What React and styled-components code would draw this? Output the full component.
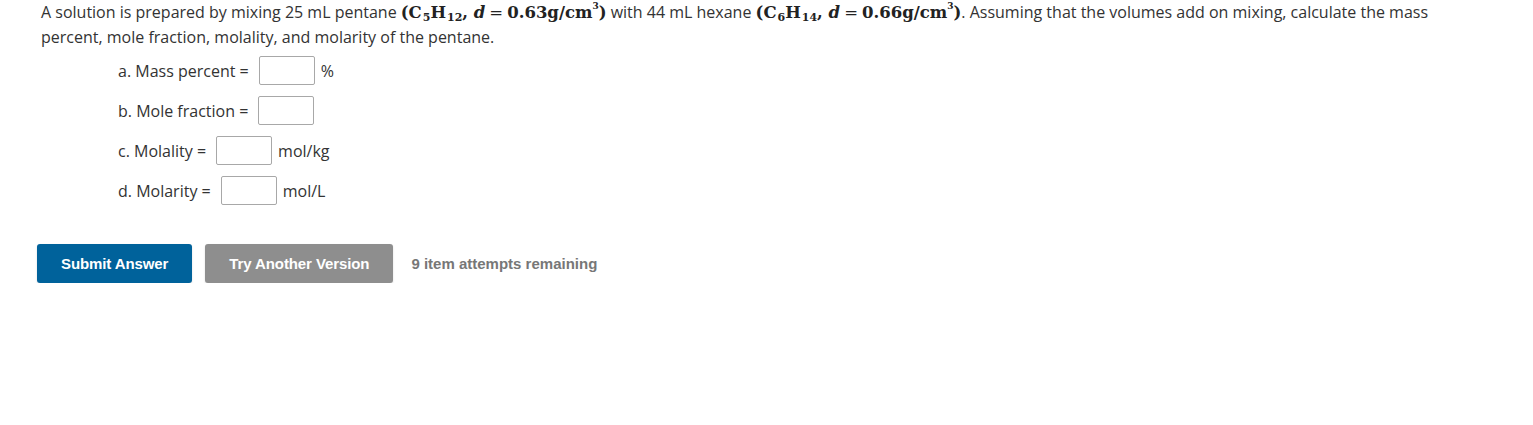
import React from "react";
import styled, { createGlobalStyle } from "styled-components";

const Global = createGlobalStyle`
  html, body { margin: 0; padding: 0; background: #fff; }
  body { font-family: "Open Sans", "Liberation Sans", sans-serif; color: #333; }
`;

const Page = styled.div`
  padding: 0 0 0 41px;
  width: 1400px;
`;

const Question = styled.p`
  margin: 0;
  font-size: 16px;
  line-height: 25px;
  color: #333;
`;

const Math = styled.span`
  font-family: "DejaVu Serif", "Liberation Serif", serif;
  font-weight: bold;
  font-size: 16.5px;
  color: #222;
`;

const Var = styled.i`
  font-weight: bold;
`;

const Eq = styled.span`
  font-weight: normal;
  margin: 0 4px;
`;

const Sub = styled.sub`
  font-size: 11px;
  vertical-align: -3px;
  line-height: 0;
  margin-left: 1px;
`;

const Sup = styled.sup`
  font-size: 9px;
  vertical-align: 9px;
  line-height: 0;
`;

const Parts = styled.div`
  display: flex;
  flex-direction: column;
  gap: 11px;
  padding: 6px 0 0 77px;
`;

const Row = styled.div`
  display: flex;
  align-items: center;
  height: 29px;
  font-size: 16px;
`;

const Label = styled.span`
  margin-right: 10px;
`;

const Box = styled.input`
  box-sizing: border-box;
  width: 56px;
  height: 29px;
  border: 1px solid #a8a8a8;
  border-radius: 2px;
  margin: 0;
  padding: 0 4px;
  font: inherit;
`;

const Unit = styled.span`
  margin-left: 6px;
  font-size: 16px;
`;

const Actions = styled.div`
  display: flex;
  align-items: center;
  gap: 13px;
  margin: 39px 0 0 -4px;
`;

const Button = styled.button`
  height: 39px;
  padding: 0 24px;
  border: none;
  border-radius: 3px;
  background: ${({ grey }) => (grey ? "#8e8e8e" : "#00629b")};
  color: #fff;
  font-family: "Liberation Sans", Arial, sans-serif;
  font-weight: bold;
  font-size: 15px;
  letter-spacing: -0.1px;
  box-shadow: 0 1px 2px rgba(0, 0, 0, 0.15);
  cursor: pointer;
`;

const Attempts = styled.span`
  margin-left: 5px;
  font-family: "Liberation Sans", Arial, sans-serif;
  font-weight: bold;
  font-size: 15px;
  color: #777;
`;

const Formula = ({ c, h, dv }) => (
  <Math>
    (C<Sub>{c}</Sub>H<Sub>{h}</Sub>, <Var>d</Var>
    <Eq>=</Eq>
    {dv}g/cm<Sup>3</Sup>)
  </Math>
);

export default function App() {
  return (
    <Page>
      <Global />
      <Question>
        A solution is prepared by mixing 25 mL pentane <Formula c="5" h="12" dv="0.63" /> with 44 mL hexane{" "}
        <Formula c="6" h="14" dv="0.66" />. Assuming that the volumes add on mixing, calculate the mass percent, mole
        fraction, molality, and molarity of the pentane.
      </Question>
      <Parts>
        <Row>
          <Label>a. Mass percent =</Label>
          <Box />
          <Unit>%</Unit>
        </Row>
        <Row>
          <Label>b. Mole fraction =</Label>
          <Box />
        </Row>
        <Row>
          <Label>c. Molality =</Label>
          <Box />
          <Unit>mol/kg</Unit>
        </Row>
        <Row>
          <Label>d. Molarity =</Label>
          <Box />
          <Unit>mol/L</Unit>
        </Row>
      </Parts>
      <Actions>
        <Button>Submit Answer</Button>
        <Button grey>Try Another Version</Button>
        <Attempts>9 item attempts remaining</Attempts>
      </Actions>
    </Page>
  );
}
